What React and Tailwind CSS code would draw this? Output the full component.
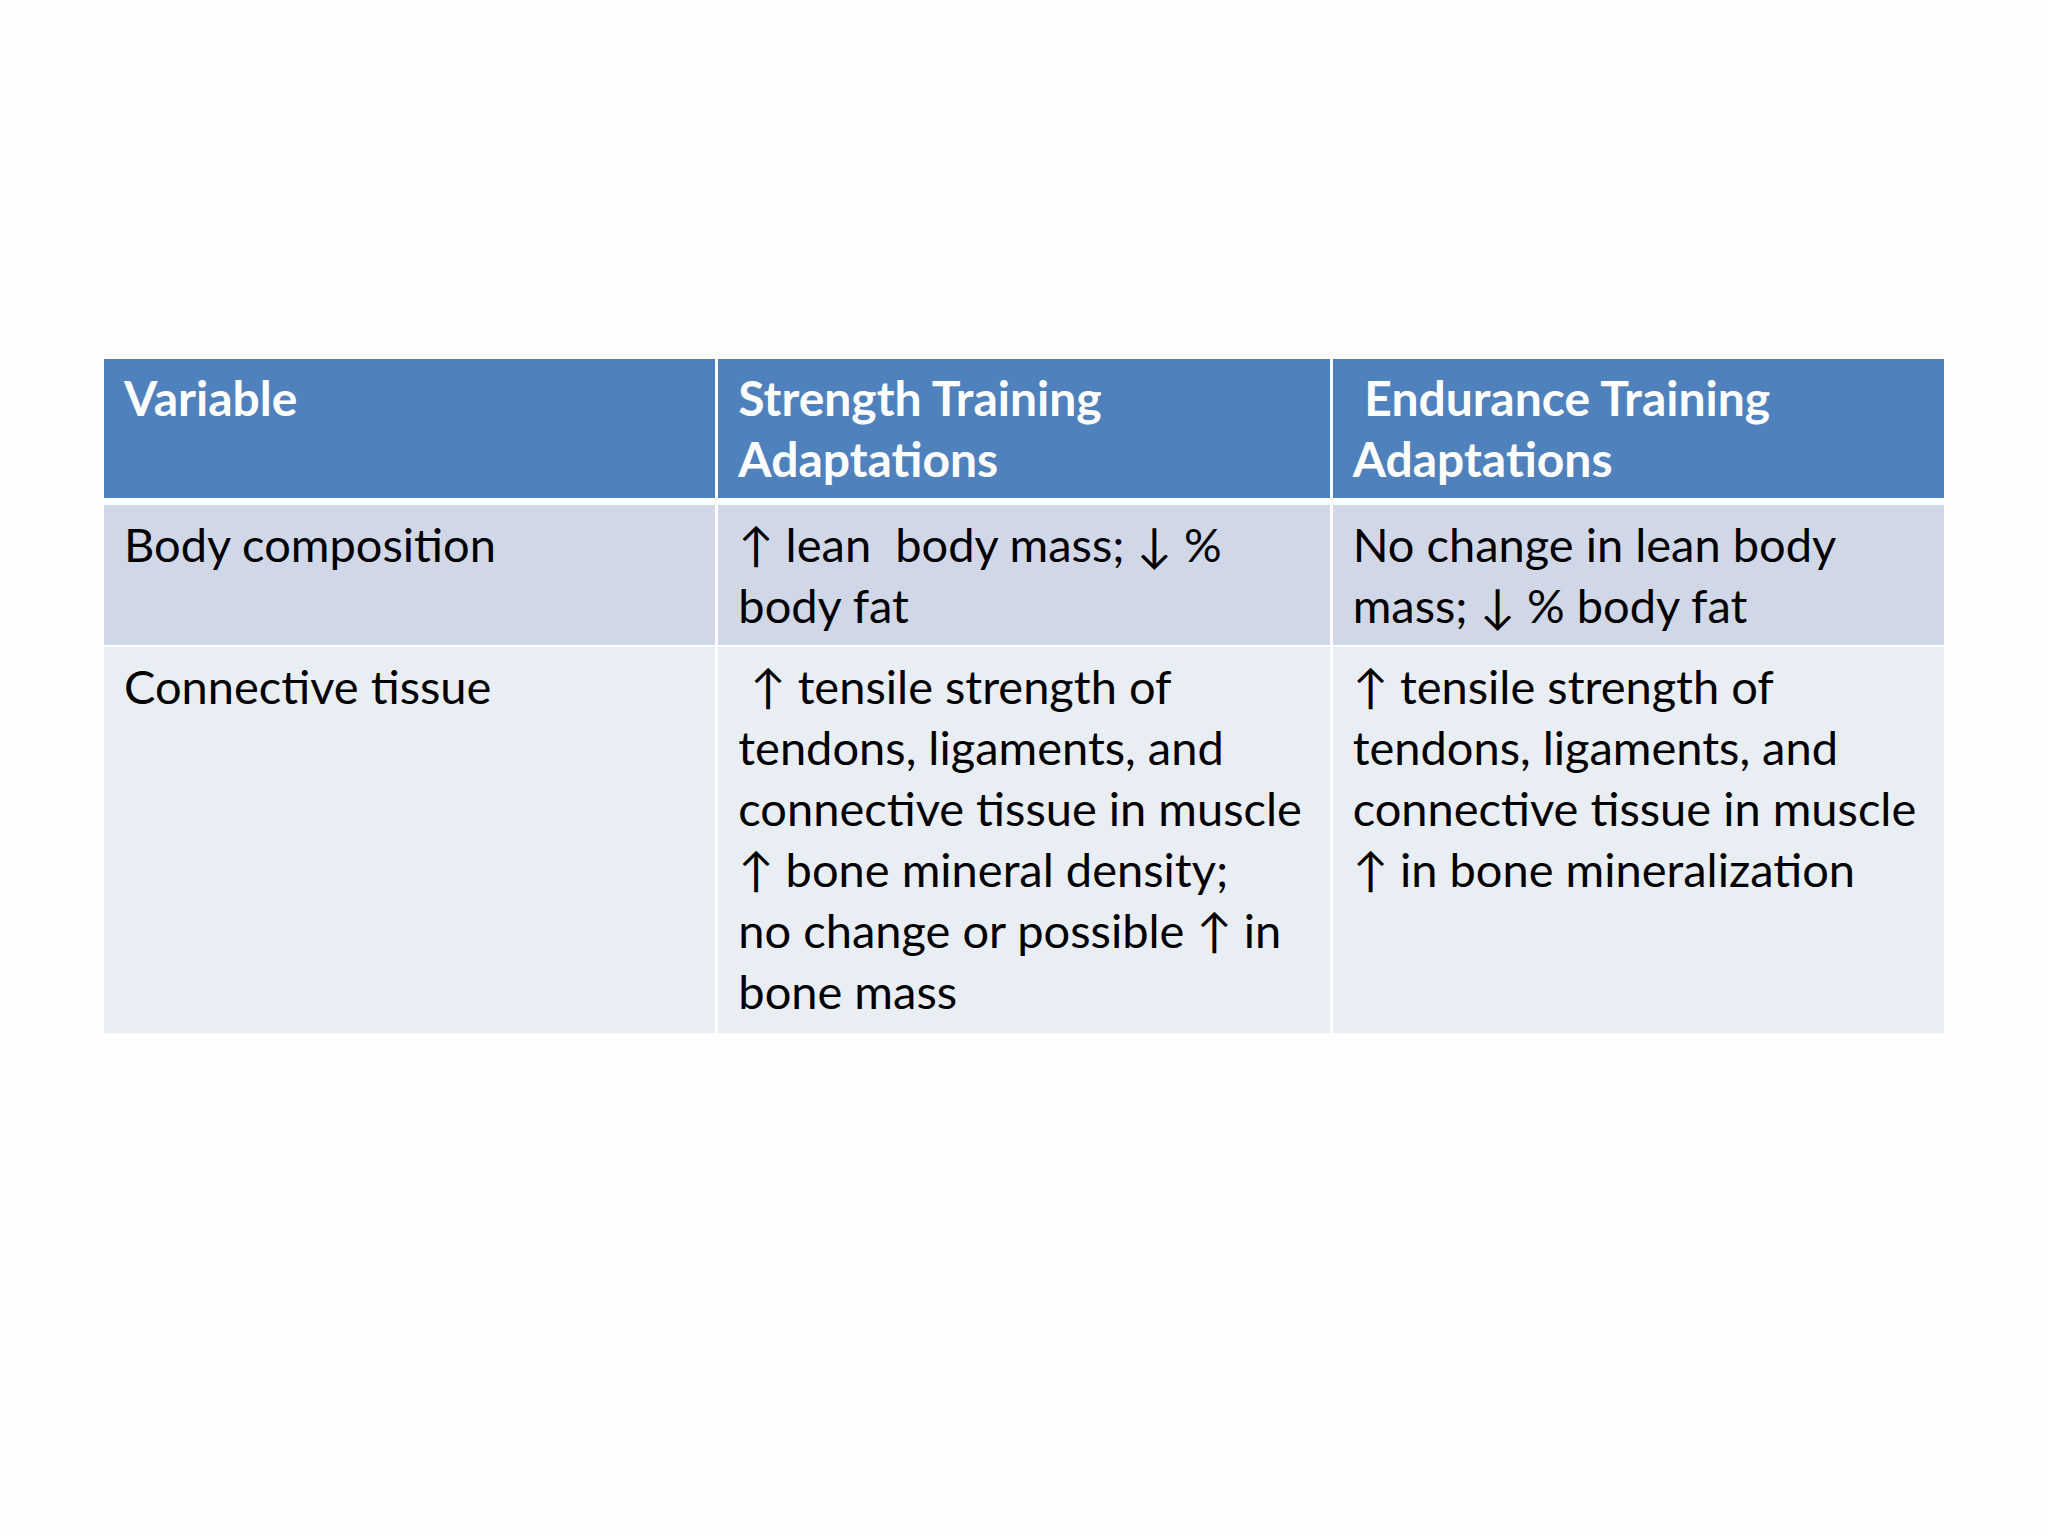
import React from "react";

const font = { fontFamily: "Lato, 'Open Sans', sans-serif" };

const header = [
  ["Variable"],
  ["Strength Training", "Adaptations"],
  ["\u00a0Endurance Training", "Adaptations"],
];

const rows = [
  {
    bg: "bg-[#d0d8e8]",
    h: "h-[140px]",
    cells: [
      ["Body composition"],
      ["\u2191 lean\u00a0 body mass; \u2193 %", "body fat"],
      ["No change in lean body", "mass; \u2193 % body fat"],
    ],
  },
  {
    bg: "bg-[#e9edf4]",
    h: "h-[386px]",
    cells: [
      ["Connective tissue"],
      [
        "\u00a0\u2191 tensile strength of",
        "tendons, ligaments, and",
        "connective tissue in muscle",
        "\u2191 bone mineral density;",
        "no change or possible \u2191 in",
        "bone mass",
      ],
      [
        "\u2191 tensile strength of",
        "tendons, ligaments, and",
        "connective tissue in muscle",
        "\u2191 in bone mineralization",
      ],
    ],
  },
];

function Lines({ lines }) {
  return lines.map((l, i) => (
    <div key={i} className="whitespace-nowrap">
      {l}
    </div>
  ));
}

export default function App() {
  return (
    <div className="w-[2048px] h-[1536px] bg-[#fefefe] pt-[359px] pl-[104px]" style={font}>
      <div className="w-[1840px] flex flex-col">
        {/* header */}
        <div className="grid grid-cols-3 gap-x-[3px] h-[139px]">
          {header.map((c, i) => (
            <div key={i} className="bg-[#4f81bd] text-white font-bold text-[48px] leading-[61px] px-[20px] pt-[8px]">
              <Lines lines={c} />
            </div>
          ))}
        </div>
        <div className="h-[7px]" />
        {rows.map((r, ri) => (
          <div key={ri} className={`grid grid-cols-3 gap-x-[3px] ${r.h} ${ri > 0 ? "mt-[2px]" : ""}`}>
            {r.cells.map((c, i) => (
              <div key={i} className={`${r.bg} text-black text-[47px] leading-[61px] px-[20px] pt-[9px]`}>
                <Lines lines={c} />
              </div>
            ))}
          </div>
        ))}
      </div>
    </div>
  );
}
